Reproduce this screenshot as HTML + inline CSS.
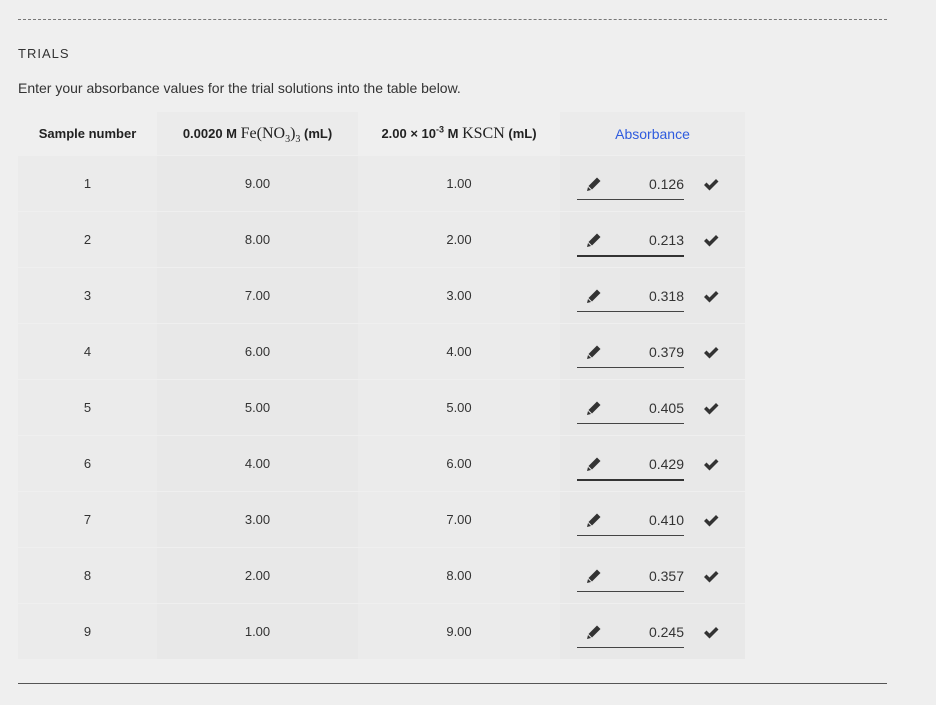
<!DOCTYPE html>
<html><head><style>
body{margin:0;background:#efefef;font-family:"Liberation Sans",sans-serif;color:#333;width:936px;height:705px;position:relative;overflow:hidden}
.dash{position:absolute;left:18px;top:19px;width:869px;border-top:1px dashed #777}
.bot{position:absolute;left:18px;top:683px;width:869px;border-top:1px solid #555}
.t1{position:absolute;left:18px;top:46px;font-size:13px;letter-spacing:1px;color:#333}
.t2{position:absolute;left:18px;top:80px;font-size:14px;color:#333}
table{position:absolute;left:18px;top:111px;border-collapse:separate;border-spacing:0 1px;font-size:13px}
td,th{padding:0;text-align:center}
th{height:43px;font-size:13px;font-weight:bold;color:#222;line-height:16px}
th.d{background:#ebebeb}
sub,sup{line-height:0}
td{height:55px;background:#ebebeb}
td.d{background:#e8e8e8}
.c1{width:139px}.c2{width:201px}.c3{width:202px}.c4{width:185px}
.inp{position:relative;height:55px}
.inp .u{position:absolute;left:17px;top:43px;width:107px;border-top:1px solid #444}
.inp .u.b{border-top:2px solid #333}
.inp .v{position:absolute;right:61px;top:20px;font-size:14px;color:#333}
.inp svg{position:absolute}
</style></head><body>
<div class="dash"></div>
<div class="t1">TRIALS</div>
<div class="t2">Enter your absorbance values for the trial solutions into the table below.</div>
<table>
<tr><th class="c1">Sample number</th><th class="c2 d">0.0020 M <span style="font-family:'Liberation Serif',serif;font-weight:normal;font-size:16px">Fe(NO<sub style="font-size:10px">3</sub>)<sub style="font-size:10px">3</sub></span> (mL)</th><th class="c3">2.00 × 10<sup style="font-size:9px">-3</sup> M <span style="font-family:'Liberation Serif',serif;font-weight:normal;font-size:16px">KSCN</span> (mL)</th><th class="c4 d" style="color:#2e5bde;font-weight:normal;font-size:14px">Absorbance</th></tr>
</table>
<script>
var d=[[1,"9.00","1.00","0.126",0],[2,"8.00","2.00","0.213",1],[3,"7.00","3.00","0.318",0],[4,"6.00","4.00","0.379",0],[5,"5.00","5.00","0.405",0],[6,"4.00","6.00","0.429",1],[7,"3.00","7.00","0.410",0],[8,"2.00","8.00","0.357",0],[9,"1.00","9.00","0.245",0]];
var pen='<svg style="left:26px;top:20px" width="16" height="16" viewBox="0 0 16 16"><path d="M11 1.5l3.5 3.5-8.5 8.5-3.5-3.5z" fill="#333"/><path d="M2 11l3 3-4 1z" fill="#333"/></svg>';
var chk='<svg style="left:143px;top:22px" width="16" height="13" viewBox="0 0 16 13"><path d="M1 7l2.5-2.5 3 3 6.5-6.5 2.5 2.5-9 9z" fill="#333"/></svg>';
var h='';
d.forEach(function(r){h+='<tr><td class="c1">'+r[0]+'</td><td class="c2 d">'+r[1]+'</td><td class="c3">'+r[2]+'</td><td class="c4 d"><div class="inp">'+pen+'<span class="v">'+r[3]+'</span><div class="u'+(r[4]?' b':'')+'"></div>'+chk+'</div></td></tr>';});
document.querySelector('table').insertAdjacentHTML('beforeend',h);
</script>
<div class="bot"></div>
</body></html>
